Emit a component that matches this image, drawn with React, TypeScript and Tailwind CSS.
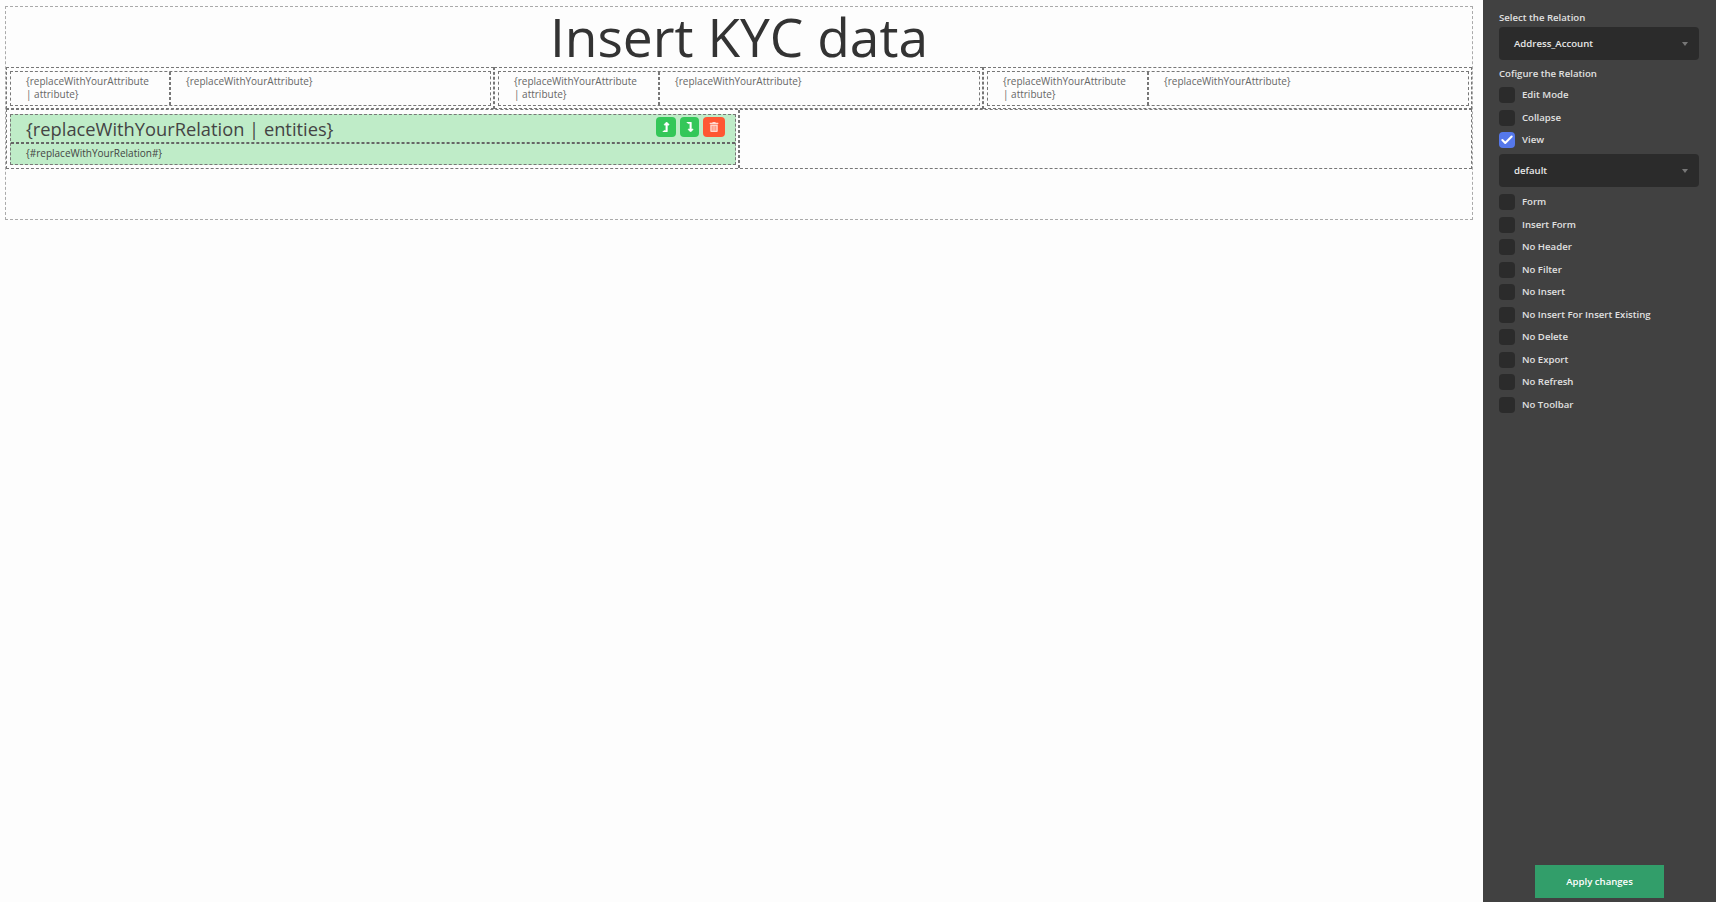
import { FaLevelUpAlt, FaLevelDownAlt, FaTrashAlt } from 'react-icons/fa';
import { Check } from 'lucide-react';

const optionsTop = ['Edit Mode', 'Collapse'];
const optionsBottom = [
  'Form',
  'Insert Form',
  'No Header',
  'No Filter',
  'No Insert',
  'No Insert For Insert Existing',
  'No Delete',
  'No Export',
  'No Refresh',
  'No Toolbar',
];

function AttributeColumn({ width, cell }: { width: string; cell: string }) {
  return (
    <div className={`h-[42px] border border-dashed border-[#777] pl-[3px] pr-[2px] pt-[3px] ${width}`}>
      <div className="flex h-[35px] border border-dashed border-[#777] text-[10px] leading-[13px] text-[#666]">
        <div className={`border-r border-dashed border-[#777] pl-[15px] pr-[15px] pt-[3px] ${cell}`}>
          {'{replaceWithYourAttribute | attribute}'}
        </div>
        <div className="flex-1 border-l border-dashed border-[#777] pl-[15px] pt-[3px]">
          {'{replaceWithYourAttribute}'}
        </div>
      </div>
    </div>
  );
}

function Select({ value }: { value: string }) {
  return (
    <div className="flex h-[33px] w-[200px] items-center justify-between rounded-[4px] bg-[#2b2b2b] pl-[15px] pr-[11px] text-[9.6px] font-semibold text-[#e8e8e8]">
      <span className="pt-[1px]">{value}</span>
      <span className="h-0 w-0 border-x-[3.5px] border-t-[4px] border-x-transparent border-t-[#777]" />
    </div>
  );
}

function Option({ label, checked, top }: { label: string; checked?: boolean; top?: boolean }) {
  return (
    <div className="flex h-[22.5px] items-center gap-[7px] text-[9.6px] font-semibold text-[#e0e0e0]">
      <span
        className={
          checked
            ? 'flex h-[16px] w-[16px] items-center justify-center rounded-[4px] bg-[#5578eb]'
            : 'h-[16px] w-[16px] rounded-[4px] bg-[#2b2b2b]'
        }
      >
        {checked && <Check size={14} strokeWidth={3.5} color="#fff" />}
      </span>
      <span className={top ? '' : 'pt-[1px]'}>{label}</span>
    </div>
  );
}

export default function App() {
  return (
    <div className="flex h-screen w-full overflow-hidden bg-[#fdfdfd] font-['Open_Sans',sans-serif]">
      <main className="w-[1483px] pl-[5px] pt-[6px]">
        <div className="h-[214px] w-[1468px] border border-dashed border-[#aaa]">
          <h1 className="h-[60px] text-center text-[53.3px] font-normal leading-[60px] text-[#333]">
            Insert KYC data
          </h1>
          <div className="flex">
            <AttributeColumn width="w-[488px]" cell="w-[159px]" />
            <AttributeColumn width="w-[489px]" cell="w-[160px]" />
            <AttributeColumn width="w-[489px]" cell="w-[160px]" />
          </div>
          <div className="flex h-[60px] border border-dashed border-[#777]">
            <div className="h-full w-[732px] border-r border-dashed border-[#777] pl-[3px] pr-[2px] pt-[4px]">
              <div className="h-[51px] border border-dashed border-[#777] bg-[#bfecc8]">
                <div className="flex h-[28px] items-start justify-between border-b border-dashed border-[#666] pl-[15px] pr-[10px]">
                  <span className="text-[18.3px] leading-[27px] text-[#444]">
                    {'{replaceWithYourRelation | entities}'}
                  </span>
                  <div className="mt-[2px] flex gap-[4px]">
                    <button type="button" className="flex h-[20px] w-[20px] items-center justify-center rounded-[4px] bg-[#34c759] text-white">
                      <FaLevelUpAlt size={10} stroke="currentColor" strokeWidth={25} />
                    </button>
                    <button type="button" className="flex h-[20px] w-[19px] items-center justify-center rounded-[4px] bg-[#34c759] text-white">
                      <FaLevelDownAlt size={10} stroke="currentColor" strokeWidth={25} />
                    </button>
                    <button type="button" className="flex h-[20px] w-[22px] items-center justify-center rounded-[4px] bg-[#ff5733] text-[#ffd9d0]">
                      <FaTrashAlt size={10} />
                    </button>
                  </div>
                </div>
                <div className="border-t border-dashed border-[#666] pl-[15px] pt-[1px] text-[10px] leading-[16px] text-[#444]">
                  {'{#replaceWithYourRelation#}'}
                </div>
              </div>
            </div>
            <div className="flex-1 border-l border-dashed border-[#777]" />
          </div>
        </div>
      </main>
      <aside className="flex h-full flex-1 flex-col bg-[#414141] pl-[16px] pt-[10px]">
        <label className="h-[17px] pt-[1px] text-[9.6px] font-semibold leading-[14px] text-[#e0e0e0]">Select the Relation</label>
        <Select value="Address_Account" />
        <label className="mt-[6px] h-[18px] pt-[1px] text-[9.6px] font-semibold leading-[14px] text-[#e0e0e0]">Cofigure the Relation</label>
        {optionsTop.map((o) => (
          <Option key={o} label={o} top />
        ))}
        <Option label="View" checked top />
        <div className="mb-[3.75px] mt-[2.5px]">
          <Select value="default" />
        </div>
        {optionsBottom.map((o) => (
          <Option key={o} label={o} />
        ))}
        <button
          type="button"
          className="mb-[4px] ml-[36px] mt-auto h-[33px] w-[129px] bg-[#329e6a] pt-[1px] text-[9.6px] font-semibold text-white"
        >
          Apply changes
        </button>
      </aside>
    </div>
  );
}
